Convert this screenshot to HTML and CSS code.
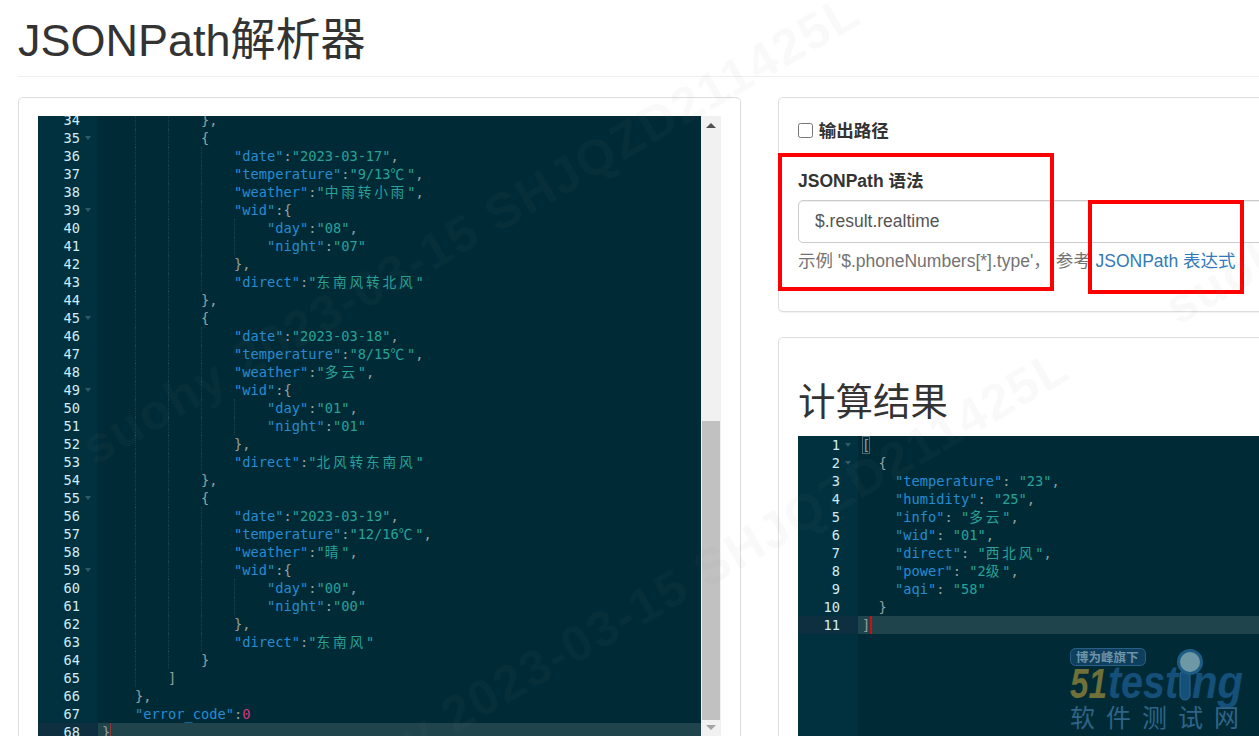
FILE: index.html
```html
<!DOCTYPE html>
<html lang="zh-CN">
<head>
<meta charset="utf-8">
<title>JSONPath解析器</title>
<link rel="stylesheet" href="styles.css">
</head>
<body>
<header class="page-header"><h1>JSONPath解析器</h1></header>
<main class="columns">
<section class="panel left-panel">
<div class="editor-wrap">
<div class="editor big">
<div class="ln"><span class="gut">34</span><span class="code"><b class="t"></b><b class="t"></b><b class="t"></b>},</span></div>
<div class="ln"><span class="gut fold">35</span><span class="code"><b class="t"></b><b class="t"></b><b class="t"></b>{</span></div>
<div class="ln"><span class="gut">36</span><span class="code"><b class="t"></b><b class="t"></b><b class="t"></b><b class="t"></b><span class="k">"date"</span>:<span class="s">"2023-03-17"</span>,</span></div>
<div class="ln"><span class="gut">37</span><span class="code"><b class="t"></b><b class="t"></b><b class="t"></b><b class="t"></b><span class="k">"temperature"</span>:<span class="s">"9/13<span class="z">℃</span>"</span>,</span></div>
<div class="ln"><span class="gut">38</span><span class="code"><b class="t"></b><b class="t"></b><b class="t"></b><b class="t"></b><span class="k">"weather"</span>:<span class="s">"<span class="z">中雨转小雨</span>"</span>,</span></div>
<div class="ln"><span class="gut fold">39</span><span class="code"><b class="t"></b><b class="t"></b><b class="t"></b><b class="t"></b><span class="k">"wid"</span>:{</span></div>
<div class="ln"><span class="gut">40</span><span class="code"><b class="t"></b><b class="t"></b><b class="t"></b><b class="t"></b><b class="t"></b><span class="k">"day"</span>:<span class="s">"08"</span>,</span></div>
<div class="ln"><span class="gut">41</span><span class="code"><b class="t"></b><b class="t"></b><b class="t"></b><b class="t"></b><b class="t"></b><span class="k">"night"</span>:<span class="s">"07"</span></span></div>
<div class="ln"><span class="gut">42</span><span class="code"><b class="t"></b><b class="t"></b><b class="t"></b><b class="t"></b>},</span></div>
<div class="ln"><span class="gut">43</span><span class="code"><b class="t"></b><b class="t"></b><b class="t"></b><b class="t"></b><span class="k">"direct"</span>:<span class="s">"<span class="z">东南风转北风</span>"</span></span></div>
<div class="ln"><span class="gut">44</span><span class="code"><b class="t"></b><b class="t"></b><b class="t"></b>},</span></div>
<div class="ln"><span class="gut fold">45</span><span class="code"><b class="t"></b><b class="t"></b><b class="t"></b>{</span></div>
<div class="ln"><span class="gut">46</span><span class="code"><b class="t"></b><b class="t"></b><b class="t"></b><b class="t"></b><span class="k">"date"</span>:<span class="s">"2023-03-18"</span>,</span></div>
<div class="ln"><span class="gut">47</span><span class="code"><b class="t"></b><b class="t"></b><b class="t"></b><b class="t"></b><span class="k">"temperature"</span>:<span class="s">"8/15<span class="z">℃</span>"</span>,</span></div>
<div class="ln"><span class="gut">48</span><span class="code"><b class="t"></b><b class="t"></b><b class="t"></b><b class="t"></b><span class="k">"weather"</span>:<span class="s">"<span class="z">多云</span>"</span>,</span></div>
<div class="ln"><span class="gut fold">49</span><span class="code"><b class="t"></b><b class="t"></b><b class="t"></b><b class="t"></b><span class="k">"wid"</span>:{</span></div>
<div class="ln"><span class="gut">50</span><span class="code"><b class="t"></b><b class="t"></b><b class="t"></b><b class="t"></b><b class="t"></b><span class="k">"day"</span>:<span class="s">"01"</span>,</span></div>
<div class="ln"><span class="gut">51</span><span class="code"><b class="t"></b><b class="t"></b><b class="t"></b><b class="t"></b><b class="t"></b><span class="k">"night"</span>:<span class="s">"01"</span></span></div>
<div class="ln"><span class="gut">52</span><span class="code"><b class="t"></b><b class="t"></b><b class="t"></b><b class="t"></b>},</span></div>
<div class="ln"><span class="gut">53</span><span class="code"><b class="t"></b><b class="t"></b><b class="t"></b><b class="t"></b><span class="k">"direct"</span>:<span class="s">"<span class="z">北风转东南风</span>"</span></span></div>
<div class="ln"><span class="gut">54</span><span class="code"><b class="t"></b><b class="t"></b><b class="t"></b>},</span></div>
<div class="ln"><span class="gut fold">55</span><span class="code"><b class="t"></b><b class="t"></b><b class="t"></b>{</span></div>
<div class="ln"><span class="gut">56</span><span class="code"><b class="t"></b><b class="t"></b><b class="t"></b><b class="t"></b><span class="k">"date"</span>:<span class="s">"2023-03-19"</span>,</span></div>
<div class="ln"><span class="gut">57</span><span class="code"><b class="t"></b><b class="t"></b><b class="t"></b><b class="t"></b><span class="k">"temperature"</span>:<span class="s">"12/16<span class="z">℃</span>"</span>,</span></div>
<div class="ln"><span class="gut">58</span><span class="code"><b class="t"></b><b class="t"></b><b class="t"></b><b class="t"></b><span class="k">"weather"</span>:<span class="s">"<span class="z">晴</span>"</span>,</span></div>
<div class="ln"><span class="gut fold">59</span><span class="code"><b class="t"></b><b class="t"></b><b class="t"></b><b class="t"></b><span class="k">"wid"</span>:{</span></div>
<div class="ln"><span class="gut">60</span><span class="code"><b class="t"></b><b class="t"></b><b class="t"></b><b class="t"></b><b class="t"></b><span class="k">"day"</span>:<span class="s">"00"</span>,</span></div>
<div class="ln"><span class="gut">61</span><span class="code"><b class="t"></b><b class="t"></b><b class="t"></b><b class="t"></b><b class="t"></b><span class="k">"night"</span>:<span class="s">"00"</span></span></div>
<div class="ln"><span class="gut">62</span><span class="code"><b class="t"></b><b class="t"></b><b class="t"></b><b class="t"></b>},</span></div>
<div class="ln"><span class="gut">63</span><span class="code"><b class="t"></b><b class="t"></b><b class="t"></b><b class="t"></b><span class="k">"direct"</span>:<span class="s">"<span class="z">东南风</span>"</span></span></div>
<div class="ln"><span class="gut">64</span><span class="code"><b class="t"></b><b class="t"></b><b class="t"></b>}</span></div>
<div class="ln"><span class="gut">65</span><span class="code"><b class="t"></b><b class="t"></b>]</span></div>
<div class="ln"><span class="gut">66</span><span class="code"><b class="t"></b>},</span></div>
<div class="ln"><span class="gut">67</span><span class="code"><b class="t"></b><span class="k">"error_code"</span>:<span class="n">0</span></span></div>
<div class="ln active"><span class="gut">68</span><span class="code"><span class="caret">}</span></span></div>
</div>
<div class="scrollbar">
<span class="arrow up"></span>
<span class="track"><span class="thumb"></span></span>
<span class="arrow down"></span>
</div>
</div>
</section>
<div class="right-col">
<section class="panel form-panel">
<label class="check"><input type="checkbox"> 输出路径</label>
<label class="field-label" for="jp">JSONPath 语法</label>
<input id="jp" class="text-input" type="text" value="$.result.realtime">
<p class="help">示例 '$.phoneNumbers[*].type'， 参考 <a href="#">JSONPath 表达式</a></p>
</section>
<section class="panel result-panel">
<h2>计算结果</h2>
<div class="editor small">
<div class="ln"><span class="gut fold">1</span><span class="code"><span class="match">[</span></span></div>
<div class="ln"><span class="gut fold">2</span><span class="code"><b class="h"></b>{</span></div>
<div class="ln"><span class="gut">3</span><span class="code"><b class="h"></b><b class="h"></b><span class="k">"temperature"</span>: <span class="s">"23"</span>,</span></div>
<div class="ln"><span class="gut">4</span><span class="code"><b class="h"></b><b class="h"></b><span class="k">"humidity"</span>: <span class="s">"25"</span>,</span></div>
<div class="ln"><span class="gut">5</span><span class="code"><b class="h"></b><b class="h"></b><span class="k">"info"</span>: <span class="s">"<span class="z">多云</span>"</span>,</span></div>
<div class="ln"><span class="gut">6</span><span class="code"><b class="h"></b><b class="h"></b><span class="k">"wid"</span>: <span class="s">"01"</span>,</span></div>
<div class="ln"><span class="gut">7</span><span class="code"><b class="h"></b><b class="h"></b><span class="k">"direct"</span>: <span class="s">"<span class="z">西北风</span>"</span>,</span></div>
<div class="ln"><span class="gut">8</span><span class="code"><b class="h"></b><b class="h"></b><span class="k">"power"</span>: <span class="s">"2<span class="z">级</span>"</span>,</span></div>
<div class="ln"><span class="gut">9</span><span class="code"><b class="h"></b><b class="h"></b><span class="k">"aqi"</span>: <span class="s">"58"</span></span></div>
<div class="ln"><span class="gut">10</span><span class="code"><b class="h"></b>}</span></div>
<div class="ln active"><span class="gut">11</span><span class="code"><span class="caret">]</span></span></div>
</div>
</section>
</div>
</main>
<div class="mark box-a"></div>
<div class="mark box-b"></div>
<svg class="logo" viewBox="0 0 175 86" width="175" height="86">
<rect class="logo-pill" x="0.5" y="3.5" width="75" height="17" rx="5"/>
<text class="logo-tag" x="6" y="17">博为峰旗下</text>
<text class="logo-51" x="0" y="53" textLength="37" lengthAdjust="spacingAndGlyphs">51</text>
<text class="logo-word" x="38" y="53" textLength="70" lengthAdjust="spacingAndGlyphs">test</text>
<text class="logo-word" x="122" y="53" textLength="51" lengthAdjust="spacingAndGlyphs">ng</text>
<rect class="logo-stem" x="110" y="25" width="10" height="30" rx="5"/>
<circle class="logo-lens" cx="120" cy="17" r="11.5"/>
<text class="logo-cn" x="0" y="82">软件测试网</text>
</svg>
<div class="wm wm1">suohy 2023-03-15 SHJQZD211425L</div>
<div class="wm wm2">suohy 2023-03-15 SHJQZD211425L</div>
<div class="wm wm3">suohy 2023-03-15 SHJQZD211425L</div>
</body>
</html>
```
FILE: styles.css
```css
* { box-sizing: border-box; }
html, body { margin: 0; height: 736px; overflow: hidden; }
body {
  position: relative;
  width: 1259px;
  background: #fff;
  color: #333;
  font-family: "Liberation Sans", "Noto Sans CJK SC", sans-serif;
  font-size: 17.5px;
  line-height: 1.43;
}
h1 { margin: 0; font-weight: 400; font-size: 45px; line-height: 1.1; }
h2 { margin: 0; font-weight: 400; font-size: 37.5px; line-height: 1.1; }
.page-header {
  margin-left: 18px;
  padding-top: 16px;
  height: 77px;
  border-bottom: 1px solid #eee;
}
.columns {
  display: grid;
  grid-template-columns: 723px 700px;
  column-gap: 37px;
  margin: 20px 0 0 18px;
}
.panel {
  border: 1px solid #ddd;
  border-radius: 5px;
  background: #fff;
  box-shadow: 0 1px 1px rgba(0,0,0,.05);
  padding: 18px 19px;
}
.left-panel { height: 700px; }
.editor-wrap { display: flex; height: 621px; width: 683px; }

.editor {
  font-family: "DejaVu Sans Mono", "Noto Sans CJK SC", monospace;
  font-size: 13.7px;
  line-height: 18px;
  color: #93a1a1;
  background: #002b36;
  overflow: hidden;
}
.big { width: 663px; flex: none; }
.big .ln:first-child { margin-top: -5px; }
.small {
  width: 700px;
  height: 320px;
  background: linear-gradient(to right, #01313f 60px, #002b36 60px);
}
.ln { display: flex; height: 18px; white-space: pre; }
.gut {
  flex: none;
  width: 60px;
  padding-right: 18px;
  text-align: right;
  background: #01313f;
  color: #d0edf7;
  position: relative;
}
.fold::after {
  content: "";
  position: absolute;
  left: 47px;
  top: 7px;
  border-left: 3.5px solid transparent;
  border-right: 3.5px solid transparent;
  border-top: 4px solid #2f5a66;
}
.code { flex: 1; padding-left: 4px; display: block; }
.t {
  display: inline-block;
  width: 33px;
  height: 18px;
  vertical-align: top;
  border-left: 1px dotted #1b4450;
}
.t:first-child { border-left: 0; }
.h { display: inline-block; width: 16.5px; height: 18px; vertical-align: top; }
.k { color: #268bd2; }
.s { color: #2aa198; }
.n { color: #d33682; }
.z { font-size: 13.7px; line-height: 0; letter-spacing: 2.8px; font-family: "Noto Sans CJK SC", sans-serif; }
.active .gut { background: #0d2f3f; }
.active .code { background: #1f444c; }
.caret { border-right: 2px solid #c11; display: inline-block; height: 18px; vertical-align: top; }
.big .caret { border-right-width: 1px; border-right-color: #8a3a3a; }
.match { outline: 1px solid #4b6a72; outline-offset: -1px; display: inline-block; height: 18px; vertical-align: top; }

.scrollbar {
  flex: none;
  width: 20px;
  display: flex;
  flex-direction: column;
  background: #f1f1f1;
}
.arrow { flex: none; height: 17px; position: relative; }
.arrow::after {
  content: "";
  position: absolute;
  left: 5px;
  border-left: 5px solid transparent;
  border-right: 5px solid transparent;
}
.up::after { top: 7px; border-bottom: 5px solid #505050; }
.down::after { top: 5px; border-top: 5px solid #a3a3a3; }
.track { flex: 1; display: flex; flex-direction: column; justify-content: flex-end; padding: 0 1px; }
.thumb { height: 299px; background: #c1c1c1; }

.right-col { display: flex; flex-direction: column; gap: 25px; }
.form-panel { height: 215px; padding: 20px 19px 0; }
.check { display: block; font-weight: 700; height: 27px; line-height: 27px; }
.check input { margin: 0 1px 0 0; width: 15px; height: 15px; vertical-align: -1px; }
.field-label { display: block; font-weight: 700; margin-top: 24px; height: 25px; line-height: 25px; }
.text-input {
  display: block;
  width: 660px;
  height: 43px;
  margin-top: 6px;
  padding: 0 16px;
  border: 1px solid #ccc;
  border-radius: 5px;
  font: inherit;
  color: #555;
  box-shadow: inset 0 1px 1px rgba(0,0,0,.075);
}
.help { margin: 6px 0 0; color: #737373; white-space: pre; }
.help a { color: #337ab7; text-decoration: none; }
.result-panel { height: 420px; padding: 38px 19px 0; }
.result-panel h2 { height: 60px; line-height: 52px; }

.mark { position: absolute; border: 4px solid #f00; pointer-events: none; }
.box-a { left: 778px; top: 153px; width: 276px; height: 138px; }
.box-b { left: 1088px; top: 200px; width: 156px; height: 94px; }

.logo { position: absolute; left: 1070px; top: 645px; }
.logo-pill { fill: #0f3f5f; stroke: #2a5f85; stroke-width: 1; }
.logo-tag { font: 700 12.5px "Noto Sans CJK SC", sans-serif; fill: #6c94a8; }
.logo-51 { font: italic 700 42px "Liberation Sans", sans-serif; fill: #6f7138; }
.logo-word { font: italic 700 46px "Liberation Sans", sans-serif; fill: #15507a; }
.logo-stem { fill: #15507a; stroke: #2a6a92; }
.logo-lens { fill: #6f98a6; stroke: #1c5c85; stroke-width: 3; }
.logo-cn { font: 400 25px "Noto Sans CJK SC", sans-serif; letter-spacing: 11px; fill: #2f6487; }

.wm {
  position: absolute;
  transform-origin: 0 0;
  transform: rotate(-30deg);
  white-space: nowrap;
  font: 700 50px "Liberation Sans", sans-serif;
  letter-spacing: 2px;
  color: rgba(130,130,130,.05);
  pointer-events: none;
}
.wm1 { left: 72px; top: 426px; }
.wm2 { left: 281px; top: 781px; }
.wm3 { left: 1155px; top: 286px; }
```
